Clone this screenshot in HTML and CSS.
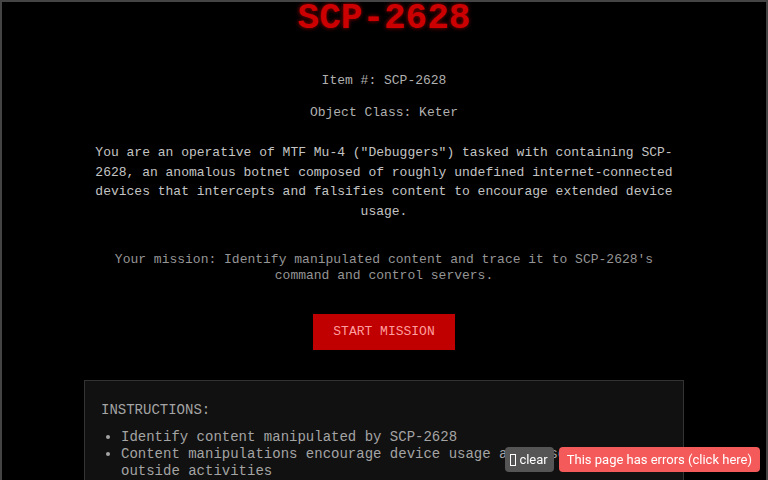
FILE: index.html
```html
<!DOCTYPE html>
<html lang="en">
<head>
    <meta charset="UTF-8">
    <meta name="viewport" content="width=device-width, initial-scale=1.0">
    <title>SCP-2628</title>
    <link rel="stylesheet" href="styles.css">
</head>
<body>
    <div class="container">
        <h1>SCP-2628</h1>
        <div class="meta">
            <p>Item #: SCP-2628</p>
            <p>Object Class: Keter</p>
        </div>
        <p class="description">You are an operative of MTF Mu-4 ("Debuggers") tasked with containing SCP-2628, an anomalous botnet composed of roughly undefined internet-connected devices that intercepts and falsifies content to encourage extended device usage.</p>
        <p class="mission">Your mission: Identify manipulated content and trace it to SCP-2628's command and control servers.</p>
        <button class="start-btn">START MISSION</button>
        <div class="instructions">
            <p>INSTRUCTIONS:</p>
            <ul>
                <li>Identify content manipulated by SCP-2628</li>
                <li>Content manipulations encourage device usage and discourage outside activities</li>
            </ul>
        </div>
    </div>

    <div class="error-bar">
        <button class="clear-btn"><svg width="6" height="12" viewBox="0 0 6 12"><rect x="0.5" y="0.5" width="5" height="11" fill="none" stroke="#fff" stroke-width="1"/></svg> clear</button>
        <button class="errors-btn">This page has errors (click here)</button>
    </div>
</body>
</html>
```

FILE: styles.css
```css
:root {
    --red: #cc0000;
    --text: #c4c4c4;
    --muted: #959595;
    --box-bg: #111111;
    --box-border: #333333;
}

html {
    background-color: #000;
}

body {
    margin: 0;
    min-height: 100vh;
    box-sizing: border-box;
    background-color: #000;
    border: 2px solid #444;
    font-family: "Liberation Mono", "Courier New", monospace;
    color: var(--text);
    overflow: hidden;
}

.container {
    width: 600px;
    margin: 0 auto;
    text-align: center;
}

h1 {
    margin: -4px 0 0;
    font-size: 36px;
    line-height: 41px;
    font-weight: 700;
    color: var(--red);
    text-shadow: 0 0 4px rgba(255, 0, 0, 0.6);
}

.meta {
    display: flex;
    flex-direction: column;
    gap: 12px;
    margin-top: 32px;
}

.meta p {
    margin: 0;
    font-size: 13px;
    line-height: 19.5px;
    color: #b0b0b0;
}

.description {
    margin: 21px 0 0;
    font-size: 13px;
    line-height: 19.5px;
    color: var(--text);
}

.mission {
    margin: 31px 0 0;
    font-size: 13px;
    line-height: 16px;
    color: var(--muted);
}

.start-btn {
    display: inline-block;
    margin-top: 30px;
    padding: 10px 20px;
    background-color: #c00000;
    color: #ff9e9e;
    border: none;
    font-family: "Liberation Mono", "Courier New", monospace;
    font-size: 13px;
    line-height: 16px;
    cursor: pointer;
}

.instructions {
    margin-top: 30px;
    padding: 21px 16px 19px;
    background-color: var(--box-bg);
    border: 1px solid var(--box-border);
    text-align: left;
    font-size: 14px;
    line-height: 17px;
    color: #a4a4a4;
}

.instructions p {
    margin: 0;
}

.instructions ul {
    margin: 10px 0 0;
    padding-left: 20px;
}

/* barra de erros */
.error-bar {
    position: fixed;
    right: 8px;
    bottom: 8px;
    display: flex;
    gap: 5px;
}

.error-bar button {
    height: 25px;
    border: none;
    border-radius: 4px;
    font-family: Roboto, "Liberation Sans", sans-serif;
    font-size: 13px;
    color: #fff;
    padding: 0 8px;
}

.clear-btn {
    background-color: #555;
    display: flex;
    align-items: center;
    gap: 3px;
}

.error-bar .clear-btn {
    padding: 0 6px 0 5px;
}

.errors-btn {
    background-color: #f55a5a;
    color: #ffecec;
}
```
